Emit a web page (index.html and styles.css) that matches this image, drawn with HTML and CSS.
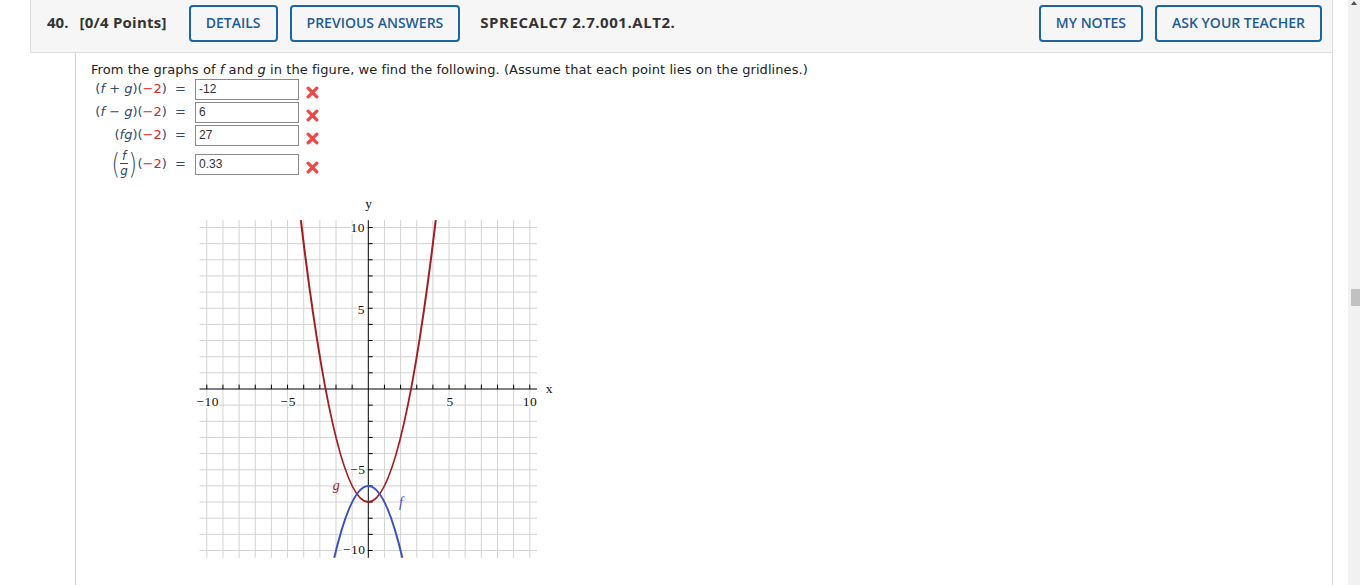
FILE: index.html
```html
<!DOCTYPE html>
<html lang="en">
<head>
<meta charset="utf-8">
<title>Question 40</title>
<link rel="stylesheet" href="styles.css">
</head>
<body>
<div class="app">
  <div class="page">
    <div class="question">
      <div class="qhead">
        <span class="qnum">40.</span>
        <span class="qpts">[0/4 Points]</span>
        <button class="btn">DETAILS</button>
        <button class="btn">PREVIOUS ANSWERS</button>
        <span class="qcode">SPRECALC7 2.7.001.ALT2.</span>
        <span class="spacer"></span>
        <button class="btn">MY NOTES</button>
        <button class="btn btn-last">ASK YOUR TEACHER</button>
      </div>
      <div class="qbody">
        <p class="intro">From the graphs of <i>f</i> and <i>g</i> in the figure, we find the following. (Assume that each point lies on the gridlines.)</p>

        <div class="eq-row">
          <span class="lbl">(<i>f</i> + <i>g</i>)(<span class="r">−2</span>) &nbsp;=</span>
          <input class="ans" type="text" value="-12" readonly>
          <svg class="xmark" viewBox="0 0 12 12" width="13" height="13"><path d="M2 2L10 10M10 2L2 10"/></svg>
        </div>
        <div class="eq-row">
          <span class="lbl">(<i>f</i> − <i>g</i>)(<span class="r">−2</span>) &nbsp;=</span>
          <input class="ans" type="text" value="6" readonly>
          <svg class="xmark" viewBox="0 0 12 12" width="13" height="13"><path d="M2 2L10 10M10 2L2 10"/></svg>
        </div>
        <div class="eq-row">
          <span class="lbl">(<i>fg</i>)(<span class="r">−2</span>) &nbsp;=</span>
          <input class="ans" type="text" value="27" readonly>
          <svg class="xmark" viewBox="0 0 12 12" width="13" height="13"><path d="M2 2L10 10M10 2L2 10"/></svg>
        </div>
        <div class="eq-row eq-tall">
          <span class="lbl lbl-frac"><span class="fracwrap"><span class="bigparen">(</span><span class="frac"><i class="num">f</i><i class="den">g</i></span><span class="bigparen">)</span></span>(<span class="r">−2</span>) &nbsp;=</span>
          <input class="ans" type="text" value="0.33" readonly>
          <svg class="xmark" viewBox="0 0 12 12" width="13" height="13"><path d="M2 2L10 10M10 2L2 10"/></svg>
        </div>

        <svg class="graph" width="380" height="375" viewBox="0 0 380 375">
          <g transform="translate(183.3 194) scale(16.15 -16.15)" fill="none">
            <path class="grid" d="M-10 -10.45V10.45M-9 -10.45V10.45M-8 -10.45V10.45M-7 -10.45V10.45M-6 -10.45V10.45M-5 -10.45V10.45M-4 -10.45V10.45M-3 -10.45V10.45M-2 -10.45V10.45M-1 -10.45V10.45M1 -10.45V10.45M2 -10.45V10.45M3 -10.45V10.45M4 -10.45V10.45M5 -10.45V10.45M6 -10.45V10.45M7 -10.45V10.45M8 -10.45V10.45M9 -10.45V10.45M10 -10.45V10.45M-10.45 -10H10.45M-10.45 -9H10.45M-10.45 -8H10.45M-10.45 -7H10.45M-10.45 -6H10.45M-10.45 -5H10.45M-10.45 -4H10.45M-10.45 -3H10.45M-10.45 -2H10.45M-10.45 -1H10.45M-10.45 1H10.45M-10.45 2H10.45M-10.45 3H10.45M-10.45 4H10.45M-10.45 5H10.45M-10.45 6H10.45M-10.45 7H10.45M-10.45 8H10.45M-10.45 9H10.45M-10.45 10H10.45"/>
            <path class="axis" d="M-10.45 0H10.45M0 -10.45V10.45M-10 0V0.27M-9 0V0.27M-8 0V0.27M-7 0V0.27M-6 0V0.27M-5 0V0.27M-4 0V0.27M-3 0V0.27M-2 0V0.27M-1 0V0.27M1 0V0.27M2 0V0.27M3 0V0.27M4 0V0.27M5 0V0.27M6 0V0.27M7 0V0.27M8 0V0.27M9 0V0.27M10 0V0.27M0 -10H0.27M0 -9H0.27M0 -8H0.27M0 -7H0.27M0 -6H0.27M0 -5H0.27M0 -4H0.27M0 -3H0.27M0 -2H0.27M0 -1H0.27M0 1H0.27M0 2H0.27M0 3H0.27M0 4H0.27M0 5H0.27M0 6H0.27M0 7H0.27M0 8H0.27M0 9H0.27M0 10H0.27"/>
          </g>
          <g class="ticklbl">
            <text x="183.8" y="13" text-anchor="middle">y</text>
            <text x="364.3" y="198" text-anchor="middle">x</text>
            <text class="halo" x="180" y="37" text-anchor="end">10</text>
            <text class="halo" x="180" y="118.5" text-anchor="end">5</text>
            <text class="halo" x="180.5" y="279" text-anchor="end">−5</text>
            <text class="halo" x="180.5" y="358.5" text-anchor="end">−10</text>
            <text class="halo" x="22.8" y="211" text-anchor="middle">−10</text>
            <text class="halo" x="103.3" y="211" text-anchor="middle">−5</text>
            <text class="halo" x="265" y="211" text-anchor="middle">5</text>
            <text class="halo" x="345" y="211" text-anchor="middle">10</text>
          </g>
          <g transform="translate(183.3 194) scale(16.15 -16.15)" fill="none">
            <path class="curve-g" d="M-4.1773 10.45Q0 -24.45 4.1773 10.45"/>
            <path class="curve-f" d="M-2.1095 -10.45Q0 -1.55 2.1095 -10.45"/>
          </g>
          <text class="fnlbl fn-g" x="151.3" y="294.5" text-anchor="middle">g</text>
          <text class="fnlbl fn-f" x="216" y="312" text-anchor="middle">f</text>
        </svg>
      </div>
    </div>
  </div>
  <div class="scrollbar"><span class="sb-arrow"></span><span class="sb-thumb"></span></div>
</div>
</body>
</html>
```
FILE: styles.css
```css
html, body {
  margin: 0;
  padding: 0;
  height: 585px;
  overflow: hidden;
  background: #fff;
}

.app {
  display: flex;
  height: 585px;
}

.page {
  width: 1348px;
  padding-left: 30px;
  box-sizing: border-box;
}

.question {
  width: 1303px;
  height: 585px;
  display: flex;
  flex-direction: column;
}

.qhead {
  height: 53px;
  box-sizing: border-box;
  background: #f6f6f6;
  border: 1px solid #dddddd;
  border-top: none;
  display: flex;
  align-items: flex-start;
  padding: 5px 10px 0 16px;
  font-family: "Open Sans", "Liberation Sans", sans-serif;
  font-weight: 700;
  font-size: 15px;
  color: #333;
}

.qnum,
.qpts,
.qcode {
  line-height: 35px;
}

.qnum { margin-right: 11px; }
.qpts { margin-right: 22px; letter-spacing: 0.25px; }
.qcode { margin-left: 8px; letter-spacing: 0.55px; }

.spacer { flex: 1; }

.btn {
  height: 37px;
  box-sizing: border-box;
  padding: 0 15px 2px;
  margin-right: 12px;
  border: 2px solid #1b65a1;
  border-radius: 4px;
  background: transparent;
  font-family: "Open Sans", "Liberation Sans", sans-serif;
  font-weight: 600;
  font-size: 14px;
  color: #1f5c95;
  cursor: pointer;
}

.btn-first { margin-right: 11px; }
.btn-last { margin-right: 0; }

.qbody {
  flex: 1;
  margin-left: 45px;
  border-left: 1px solid #cfcfcf;
  border-right: 1px solid #dddddd;
  padding: 8px 15px 0;
  font-family: "DejaVu Sans", Verdana, sans-serif;
  font-size: 13px;
  color: #222;
}

.intro {
  margin: 0;
  line-height: 18px;
  letter-spacing: 0.07px;
}

.eq-row {
  display: flex;
  align-items: center;
  height: 20px;
  margin-bottom: 3px;
}

.eq-tall {
  height: 32px;
}

.lbl {
  width: 95px;
  flex: none;
  display: block;
  text-align: right;
  white-space: nowrap;
  color: #2d4a6c;
  line-height: 20px;
}

.lbl-frac {
  line-height: 32px;
}

.fracwrap {
  display: inline-flex;
  align-items: center;
  vertical-align: middle;
  height: 32px;
}

.r { color: #d9222a; }

.bigparen {
  font-size: 29px;
  font-weight: 200;
  line-height: 32px;
  display: inline-block;
  transform: scaleX(0.75);
  margin: 0 -1px;
}

.frac {
  display: inline-flex;
  flex-direction: column;
  align-items: center;
  font-size: 12px;
  line-height: 13px;
}

.frac .num {
  border-bottom: 1px solid #2d4a6c;
  padding: 0 2px;
}

.frac .den {
  padding-top: 1px;
}

.ans {
  width: 104px;
  height: 21px;
  box-sizing: border-box;
  margin: 0 0 0 9px;
  padding: 0 3px;
  border: 1px solid #8a8a8a;
  border-radius: 0;
  background: #fff;
  font-family: "Liberation Sans", Arial, sans-serif;
  font-size: 12px;
  color: #333;
  outline: none;
}

.xmark {
  margin: 6px 0 0 7px;
  flex: none;
}

.xmark path {
  fill: none;
  stroke: #ef4646;
  stroke-width: 3;
  stroke-linecap: round;
}

.graph {
  display: block;
  margin: 15px 0 0 94px;
}

.grid {
  stroke: #d2d2d2;
  stroke-width: 1;
  vector-effect: non-scaling-stroke;
}

.axis {
  stroke: #000;
  stroke-width: 1;
  vector-effect: non-scaling-stroke;
}

.curve-g {
  stroke: #a21d20;
  stroke-width: 2;
  vector-effect: non-scaling-stroke;
}

.curve-f {
  stroke: #3c4fc2;
  stroke-width: 2;
  vector-effect: non-scaling-stroke;
}

.ticklbl text {
  font-family: "Liberation Serif", "Times New Roman", serif;
  font-size: 13.5px;
  letter-spacing: 0.5px;
  fill: #111;
}

.ticklbl .halo {
  stroke: #fff;
  stroke-width: 3px;
  paint-order: stroke;
}

.fnlbl {
  font-family: "Liberation Serif", "Times New Roman", serif;
  font-style: italic;
  font-size: 14px;
}

.fn-g { fill: #a21d20; }
.fn-f { fill: #3c4fc2; }

.scrollbar {
  flex: 1;
  background: #f1f1f1;
  display: flex;
  flex-direction: column;
  align-items: flex-start;
}

.sb-arrow {
  width: 0;
  height: 0;
  margin: 1px 0 0 3px;
  border-left: 3px solid transparent;
  border-right: 3px solid transparent;
  border-bottom: 4px solid #505050;
}

.sb-thumb {
  width: 9px;
  height: 17px;
  margin: 284px 0 0 3px;
  background: #c1c1c1;
}
```
